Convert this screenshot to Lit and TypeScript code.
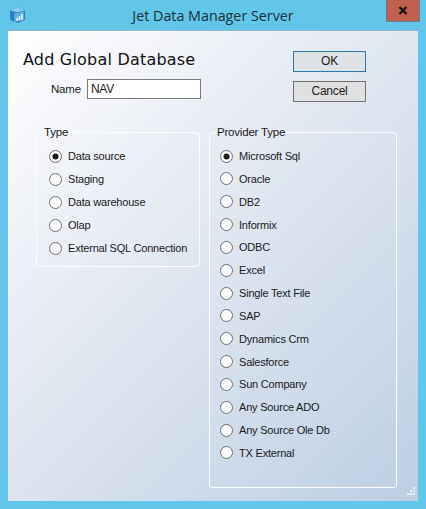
import { LitElement, html, css, svg } from "lit";
import { customElement } from "lit/decorators.js";

const TYPES = ["Data source", "Staging", "Data warehouse", "Olap", "External SQL Connection"];
const PROVIDERS = ["Microsoft Sql", "Oracle", "DB2", "Informix", "ODBC", "Excel", "Single Text File", "SAP", "Dynamics Crm", "Salesforce", "Sun Company", "Any Source ADO", "Any Source Ole Db", "TX External"];

@customElement("app-root")
export class AppRoot extends LitElement {
  static styles = css`
    :host { display: flex; flex-direction: column; width: 426px; height: 509px; background: #62c5ea; font-family: "Liberation Sans", Arial, sans-serif; font-size: 11px; letter-spacing: -0.2px; color: #1a1a1a; overflow: hidden; box-sizing: border-box; }
    .titlebar { height: 31px; flex: none; display: grid; grid-template-columns: 1fr auto 1fr; align-items: start; }
    .logo { margin: 7px 0 0 9px; width: 17px; height: 16px; display: block; }
    .title { font-family: "Open Sans", sans-serif; font-size: 14.3px; letter-spacing: 0; line-height: 32px; color: #17303c; white-space: nowrap; }
    .close { justify-self: end; margin-right: 6px; width: 34px; height: 22px; background: #c1604f; border: 1px solid #5f7f8e; border-top: none; box-sizing: border-box; display: flex; align-items: center; justify-content: center; }
    .content { flex: 1; margin: 0 8px 8px; background: linear-gradient(135deg, #ffffff 0%, #e8ecf4 35%, #bdcfe2 100%); box-shadow: 0 -1px 0 #8fb8cc; padding: 20px 52px 0 15px; position: relative; display: flex; flex-direction: column; }
    .top { display: flex; justify-content: space-between; height: 75px; flex: none; }
    h1 { margin: 0; font-family: "DejaVu Sans", sans-serif; font-weight: 400; font-size: 16px; line-height: 18px; color: #111; letter-spacing: 0.2px; }
    .name { display: flex; align-items: center; margin: 10px 0 0 28px; gap: 6px; font-size: 11.5px; }
    .input { width: 114px; height: 20px; box-sizing: border-box; border: 1px solid #7a7a7a; background: #fff; padding-left: 3px; line-height: 18px; font-size: 12px; }
    .buttons { display: flex; flex-direction: column; gap: 9px; }
    .btn { width: 73px; height: 21px; box-sizing: border-box; border: 1px solid #737373; background: #e0e0e0; text-align: center; line-height: 19px; font-size: 12px; }
    .btn.def { border-color: #2f76aa; background: #dfe3e6; }
    .groups { display: flex; gap: 9px; padding-left: 13px; margin-right: -31px; align-items: flex-start; }
    fieldset { margin: 0; box-sizing: border-box; border: 1px solid #fbfdff; border-radius: 3px; padding: 0; min-width: 0; }
    legend { margin-left: 5px; padding: 0 2px; line-height: 12px; font-size: 11.5px; }
    .type { width: 164px; height: 141px; }
    .prov { width: 188px; height: 362px; }
    .list { display: flex; flex-direction: column; padding: 9px 0 0 12px; }
    .type .list { gap: 5px; }
    .prov .list { padding-left: 10px; gap: 4.85px; }
    .item { display: flex; align-items: center; height: 18px; gap: 6px; white-space: nowrap; }
    .item svg { flex: none; }
    .grip { position: absolute; right: 2px; bottom: 3px; width: 12px; height: 12px; display: block; }
  `;

  private radio(checked: boolean) {
    return html`<svg width="13" height="13" viewBox="0 0 13 13">
      <circle cx="6.5" cy="6.5" r="6" fill="#fcfcfc" stroke="#6f6f6f" stroke-width="1"/>
      ${checked ? svg`<circle cx="6.5" cy="6.5" r="3" fill="#1c1c1c"/>` : ""}
    </svg>`;
  }

  private list(items: string[]) {
    return html`<div class="list">
      ${items.map((t, i) => html`<div class="item">${this.radio(i === 0)}<span>${t}</span></div>`)}
    </div>`;
  }

  render() {
    return html`
      <div class="titlebar">
        <svg class="logo" viewBox="0 0 16 15">
          <path d="M1 3 L8 0.5 L15 3 L15 12 L8 15 L1 12 Z" fill="#2a7fbe"/>
          <path d="M1 3 L8 0.5 L15 3 L8 5 Z" fill="#8ccdf0"/>
          <path d="M5 6 L14 4 L14 12 L5 14 Z" fill="#5bb3e2"/>
          <rect x="7" y="10" width="1.5" height="3" fill="#eaf6fc"/>
          <rect x="9.2" y="8.5" width="1.5" height="4" fill="#eaf6fc"/>
          <rect x="11.4" y="6.5" width="1.5" height="5.5" fill="#eaf6fc"/>
        </svg>
        <div class="title">Jet Data Manager Server</div>
        <div class="close">
          <svg width="10" height="9" viewBox="0 0 10 9"><path d="M1.5 1 L8.5 8 M8.5 1 L1.5 8" stroke="#1a1110" stroke-width="2.2" fill="none"/></svg>
        </div>
      </div>
      <div class="content">
        <div class="top">
          <div>
            <h1>Add Global Database</h1>
            <div class="name"><span>Name</span><div class="input">NAV</div></div>
          </div>
          <div class="buttons">
            <div class="btn def">OK</div>
            <div class="btn">Cancel</div>
          </div>
        </div>
        <div class="groups">
          <fieldset class="type"><legend>Type</legend>${this.list(TYPES)}</fieldset>
          <fieldset class="prov"><legend>Provider Type</legend>${this.list(PROVIDERS)}</fieldset>
        </div>
        <svg class="grip" viewBox="0 0 12 12" fill="#eef3f8">
          <rect x="9" y="1" width="2" height="2"/>
          <rect x="6" y="4" width="2" height="2"/><rect x="9" y="4" width="2" height="2"/>
          <rect x="3" y="7" width="2" height="2"/><rect x="6" y="7" width="2" height="2"/><rect x="9" y="7" width="2" height="2"/>
        </svg>
      </div>
    `;
  }
}
